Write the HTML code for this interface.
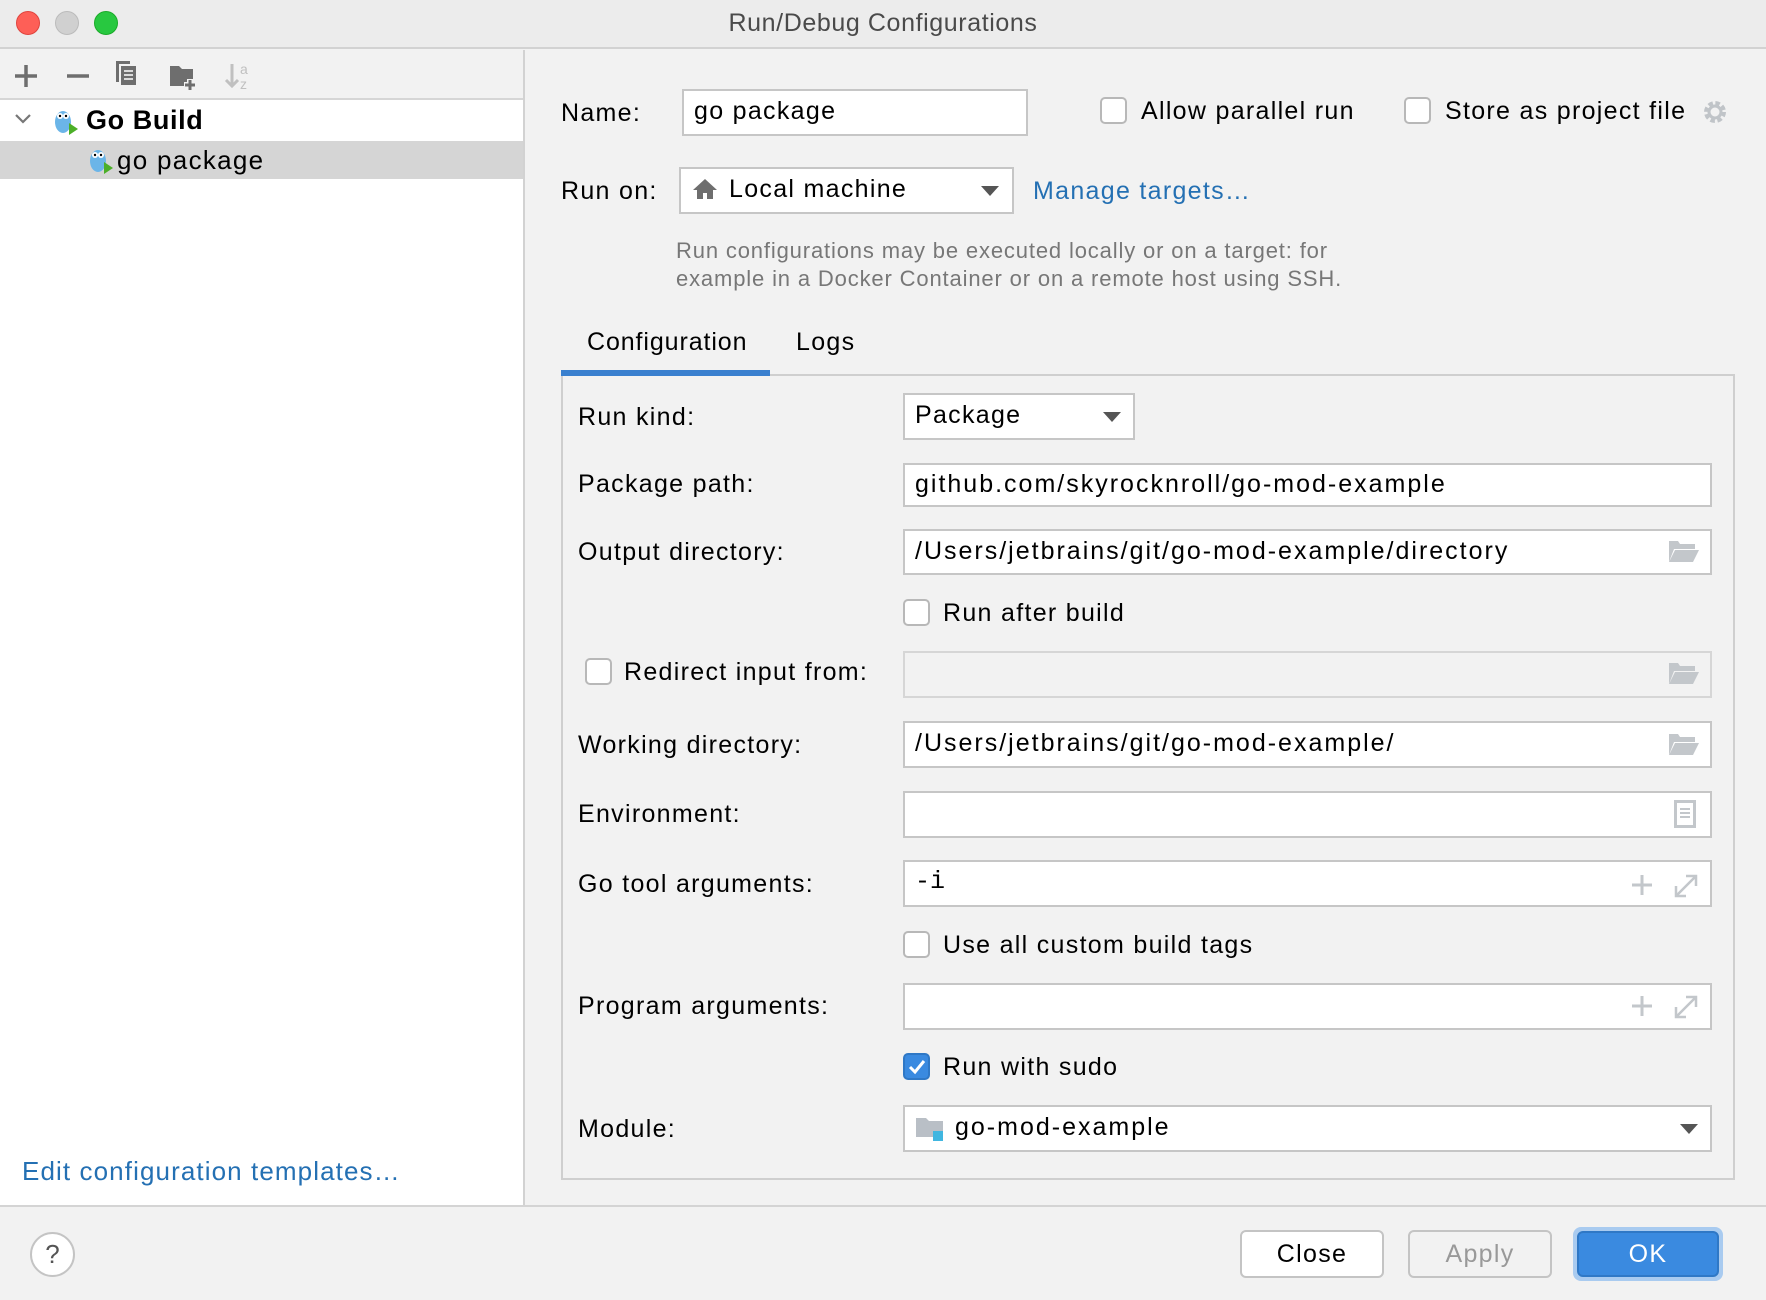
<!DOCTYPE html>
<html><head><meta charset="utf-8"><style>
*{box-sizing:border-box;margin:0;padding:0}
body{width:1766px;height:1300px;background:#f2f2f2;font-family:"Liberation Sans",sans-serif;font-size:25px;color:#000;position:relative;overflow:hidden;letter-spacing:1.3px}
.a{position:absolute}
.lbl{position:absolute;line-height:30px;white-space:nowrap}
.inp{position:absolute;background:#fff;border:2px solid #c6c6c6;line-height:40px;padding-left:10px;white-space:nowrap}
.p{letter-spacing:2px}
.cb{position:absolute;width:27px;height:27px;border:2px solid #b8b8b8;border-radius:5px;background:#fff}
.btn{position:absolute;border:2px solid #c4c4c4;border-radius:6px;background:#fff;text-align:center;line-height:44px;font-size:25px}
</style></head><body>
<div class="a" style="left:0;top:0;width:1766px;height:49px;background:#ececec;border-bottom:2px solid #d2d2d2"></div>
<div class="a" style="left:16px;top:11px;width:24px;height:24px;border-radius:50%;background:#fe5f57;border:1px solid #e0443e"></div>
<div class="a" style="left:55px;top:11px;width:24px;height:24px;border-radius:50%;background:#d0d0d0;border:1px solid #bbb"></div>
<div class="a" style="left:94px;top:11px;width:24px;height:24px;border-radius:50%;background:#28c840;border:1px solid #1aab29"></div>
<div class="lbl" style="left:0;width:1766px;text-align:center;top:8px;color:#4a4a4a;font-size:25px;letter-spacing:0.6px">Run/Debug Configurations</div>
<div class="a" style="left:0;top:50px;width:525px;height:1156px;background:#fff;border-right:2px solid #d2d2d2"></div>
<div class="a" style="left:0;top:50px;width:523px;height:50px;background:#f2f2f2;border-bottom:2px solid #d6d6d6"></div>
<svg class="a" style="left:12px;top:58px" width="240" height="34" viewBox="0 0 240 34">
<path d="M14 7v22M3 18h22" stroke="#6e6e6e" stroke-width="3.5"/>
<path d="M55 18h22" stroke="#6e6e6e" stroke-width="3.5"/>
<path d="M104 3h14v3h-11v18h-3z" fill="#6e6e6e"/><rect x="109" y="8" width="15" height="19" fill="#6e6e6e"/><path d="M112 13h9M112 17h9M112 21h9" stroke="#fff" stroke-width="1.5"/>
<path d="M158 8h9l3 3h11v17h-23z" fill="#6e6e6e"/><path d="M178 21v12M172 27h12" stroke="#f2f2f2" stroke-width="6"/><path d="M178 22v10M173 27h10" stroke="#6e6e6e" stroke-width="3"/>
<path d="M220 6v22M214 22l6 6 6-6" stroke="#c0c0c0" stroke-width="3" fill="none"/><text x="228" y="16" font-size="14" fill="#c0c0c0" font-family="Liberation Sans">a</text><text x="228" y="31" font-size="14" fill="#c0c0c0" font-family="Liberation Sans">z</text>
</svg>
<svg class="a" style="left:14px;top:112px" width="18" height="14"><path d="M2 3l7 7 7-7" stroke="#777" stroke-width="2.2" fill="none"/></svg>
<svg class="a" style="left:52px;top:106px" width="28" height="30"><ellipse cx="11" cy="16" rx="8" ry="11" fill="#6bb5e8"/><circle cx="8" cy="10" r="3" fill="#fff"/><circle cx="14" cy="10" r="3" fill="#fff"/><circle cx="8" cy="10" r="1.2"/><circle cx="14" cy="10" r="1.2"/><path d="M17 17l9 6-9 6z" fill="#4caf28"/></svg>
<div class="lbl" style="left:86px;top:105px;font-weight:bold;font-size:27px;letter-spacing:0.6px">Go Build</div>
<div class="a" style="left:0;top:141px;width:523px;height:38px;background:#d5d5d5"></div>
<svg class="a" style="left:87px;top:145px" width="28" height="30"><ellipse cx="11" cy="16" rx="8" ry="11" fill="#6bb5e8"/><circle cx="8" cy="10" r="3" fill="#fff"/><circle cx="14" cy="10" r="3" fill="#fff"/><circle cx="8" cy="10" r="1.2"/><circle cx="14" cy="10" r="1.2"/><path d="M17 17l9 6-9 6z" fill="#4caf28"/></svg>
<div class="lbl" style="left:117px;top:145px;font-size:26px">go package</div>
<div class="lbl" style="left:22px;top:1156px;color:#2470b3;font-size:26px;letter-spacing:1.1px">Edit configuration templates…</div>
<div class="a" style="left:0;top:1205px;width:1766px;height:2px;background:#d4d4d4"></div>
<div class="a" style="left:30px;top:1232px;width:45px;height:45px;border-radius:50%;border:2px solid #c4c4c4;background:#fff;text-align:center;line-height:41px;font-size:26px;color:#555;letter-spacing:0">?</div>
<div class="btn" style="left:1240px;top:1230px;width:144px;height:48px">Close</div>
<div class="btn" style="left:1408px;top:1230px;width:144px;height:48px;background:#f2f2f2;color:#999">Apply</div>
<div class="a" style="left:1573px;top:1227px;width:150px;height:54px;border-radius:8px;background:#a9cbf0"></div>
<div class="btn" style="left:1577px;top:1231px;width:142px;height:46px;background:#3a8ae0;border-color:#2f78c6;color:#fff;line-height:42px">OK</div>
<div class="lbl" style="left:561px;top:98px">Name:</div>
<div class="inp" style="left:682px;top:89px;width:346px;height:47px">go package</div>
<div class="cb" style="left:1100px;top:97px"></div>
<div class="lbl" style="left:1141px;top:96px">Allow parallel run</div>
<div class="cb" style="left:1404px;top:97px"></div>
<div class="lbl" style="left:1445px;top:96px">Store as project file</div>
<svg class="a" style="left:1701px;top:98px" width="28" height="28" viewBox="0 0 28 28"><circle cx="14" cy="14" r="8" fill="none" stroke="#c0c4c8" stroke-width="6" stroke-dasharray="4 2.3"/><circle cx="14" cy="14" r="6" fill="none" stroke="#c0c4c8" stroke-width="3"/></svg>
<div class="lbl" style="left:561px;top:176px">Run on:</div>
<div class="inp" style="left:679px;top:167px;width:335px;height:47px;padding-left:48px">Local machine</div>
<svg class="a" style="left:692px;top:177px" width="26" height="24"><path d="M13 2L1 13h4v9h6v-6h4v6h6v-9h4z" fill="#6e6e6e"/></svg>
<svg class="a" style="left:980px;top:185px" width="20" height="12"><path d="M1 1h18l-9 10z" fill="#555"/></svg>
<div class="lbl" style="left:1033px;top:176px;color:#2470b3">Manage targets…</div>
<div class="lbl" style="left:676px;top:236px;color:#777;font-size:22px;letter-spacing:0.85px">Run configurations may be executed locally or on a target: for</div>
<div class="lbl" style="left:676px;top:264px;color:#777;font-size:22px;letter-spacing:0.85px">example in a Docker Container or on a remote host using SSH.</div>
<div class="lbl" style="left:587px;top:327px;letter-spacing:0.9px">Configuration</div>
<div class="lbl" style="left:796px;top:327px">Logs</div>
<div class="a" style="left:561px;top:374px;width:1174px;height:806px;border:2px solid #cfcfcf"></div>
<div class="a" style="left:561px;top:370px;width:209px;height:6px;background:#3a80cf"></div>
<div class="lbl" style="left:578px;top:402px">Run kind:</div>
<div class="inp" style="left:903px;top:393px;width:232px;height:47px">Package</div>
<svg class="a" style="left:1102px;top:411px" width="20" height="12"><path d="M1 1h18l-9 10z" fill="#555"/></svg>
<div class="lbl" style="left:578px;top:469px">Package path:</div>
<div class="inp p" style="left:903px;top:463px;width:809px;height:44px;line-height:38px">github.com/skyrocknroll/go-mod-example</div>
<div class="lbl" style="left:578px;top:537px">Output directory:</div>
<div class="inp p" style="left:903px;top:529px;width:809px;height:46px">/Users/jetbrains/git/go-mod-example/directory</div>
<svg class="a" style="left:1669px;top:541px" width="30" height="22"><path d="M0 0h9l2 3h15v5H5L0 21z" fill="#c3c7cb"/><path d="M6 9h24l-6 12H0z" fill="#c3c7cb"/></svg>
<div class="cb" style="left:903px;top:599px"></div>
<div class="lbl" style="left:943px;top:598px">Run after build</div>
<div class="cb" style="left:585px;top:658px"></div>
<div class="lbl" style="left:624px;top:657px">Redirect input from:</div>
<div class="inp" style="left:903px;top:651px;width:809px;height:47px;background:#f2f2f2;border-color:#d6d6d6"></div>
<svg class="a" style="left:1669px;top:663px" width="30" height="22"><path d="M0 0h9l2 3h15v5H5L0 21z" fill="#c3c7cb"/><path d="M6 9h24l-6 12H0z" fill="#c3c7cb"/></svg>
<div class="lbl" style="left:578px;top:730px">Working directory:</div>
<div class="inp p" style="left:903px;top:721px;width:809px;height:47px">/Users/jetbrains/git/go-mod-example/</div>
<svg class="a" style="left:1669px;top:734px" width="30" height="22"><path d="M0 0h9l2 3h15v5H5L0 21z" fill="#c3c7cb"/><path d="M6 9h24l-6 12H0z" fill="#c3c7cb"/></svg>
<div class="lbl" style="left:578px;top:799px">Environment:</div>
<div class="inp" style="left:903px;top:791px;width:809px;height:47px"></div>
<svg class="a" style="left:1674px;top:800px" width="22" height="28"><rect x="1.5" y="1.5" width="19" height="25" fill="none" stroke="#c3c7cb" stroke-width="3"/><path d="M6 9h10M6 13h10M6 17h10" stroke="#c3c7cb" stroke-width="2"/></svg>
<div class="lbl" style="left:578px;top:869px">Go tool arguments:</div>
<div class="inp" style="left:903px;top:860px;width:809px;height:47px;font-family:'Liberation Mono',monospace;letter-spacing:0">-i</div>
<svg class="a" style="left:1630px;top:872px" width="72" height="26"><path d="M12 3v20M2 13h20" stroke="#c3c7cb" stroke-width="3"/><path d="M46 24l20-20M56 4h10v10M46 14v10h10" stroke="#c3c7cb" stroke-width="2.5" fill="none"/></svg>
<div class="cb" style="left:903px;top:931px"></div>
<div class="lbl" style="left:943px;top:930px">Use all custom build tags</div>
<div class="lbl" style="left:578px;top:991px">Program arguments:</div>
<div class="inp" style="left:903px;top:983px;width:809px;height:47px"></div>
<svg class="a" style="left:1630px;top:993px" width="72" height="26"><path d="M12 3v20M2 13h20" stroke="#c3c7cb" stroke-width="3"/><path d="M46 24l20-20M56 4h10v10M46 14v10h10" stroke="#c3c7cb" stroke-width="2.5" fill="none"/></svg>
<div class="cb" style="left:903px;top:1053px;background:#3a8ae0;border-color:#2f78c6"></div>
<svg class="a" style="left:906px;top:1056px" width="22" height="22"><path d="M4 11l5 5 9-11" stroke="#fff" stroke-width="3" fill="none"/></svg>
<div class="lbl" style="left:943px;top:1052px">Run with sudo</div>
<div class="lbl" style="left:578px;top:1114px">Module:</div>
<div class="inp p" style="left:903px;top:1105px;width:809px;height:47px;padding-left:50px">go-mod-example</div>
<svg class="a" style="left:916px;top:1116px" width="30" height="26"><path d="M0 2h10l3 3h14v16H0z" fill="#b9bfc6"/><rect x="17" y="15" width="10" height="10" fill="#40b6e0"/></svg>
<svg class="a" style="left:1679px;top:1123px" width="20" height="12"><path d="M1 1h18l-9 10z" fill="#555"/></svg>
</body></html>
